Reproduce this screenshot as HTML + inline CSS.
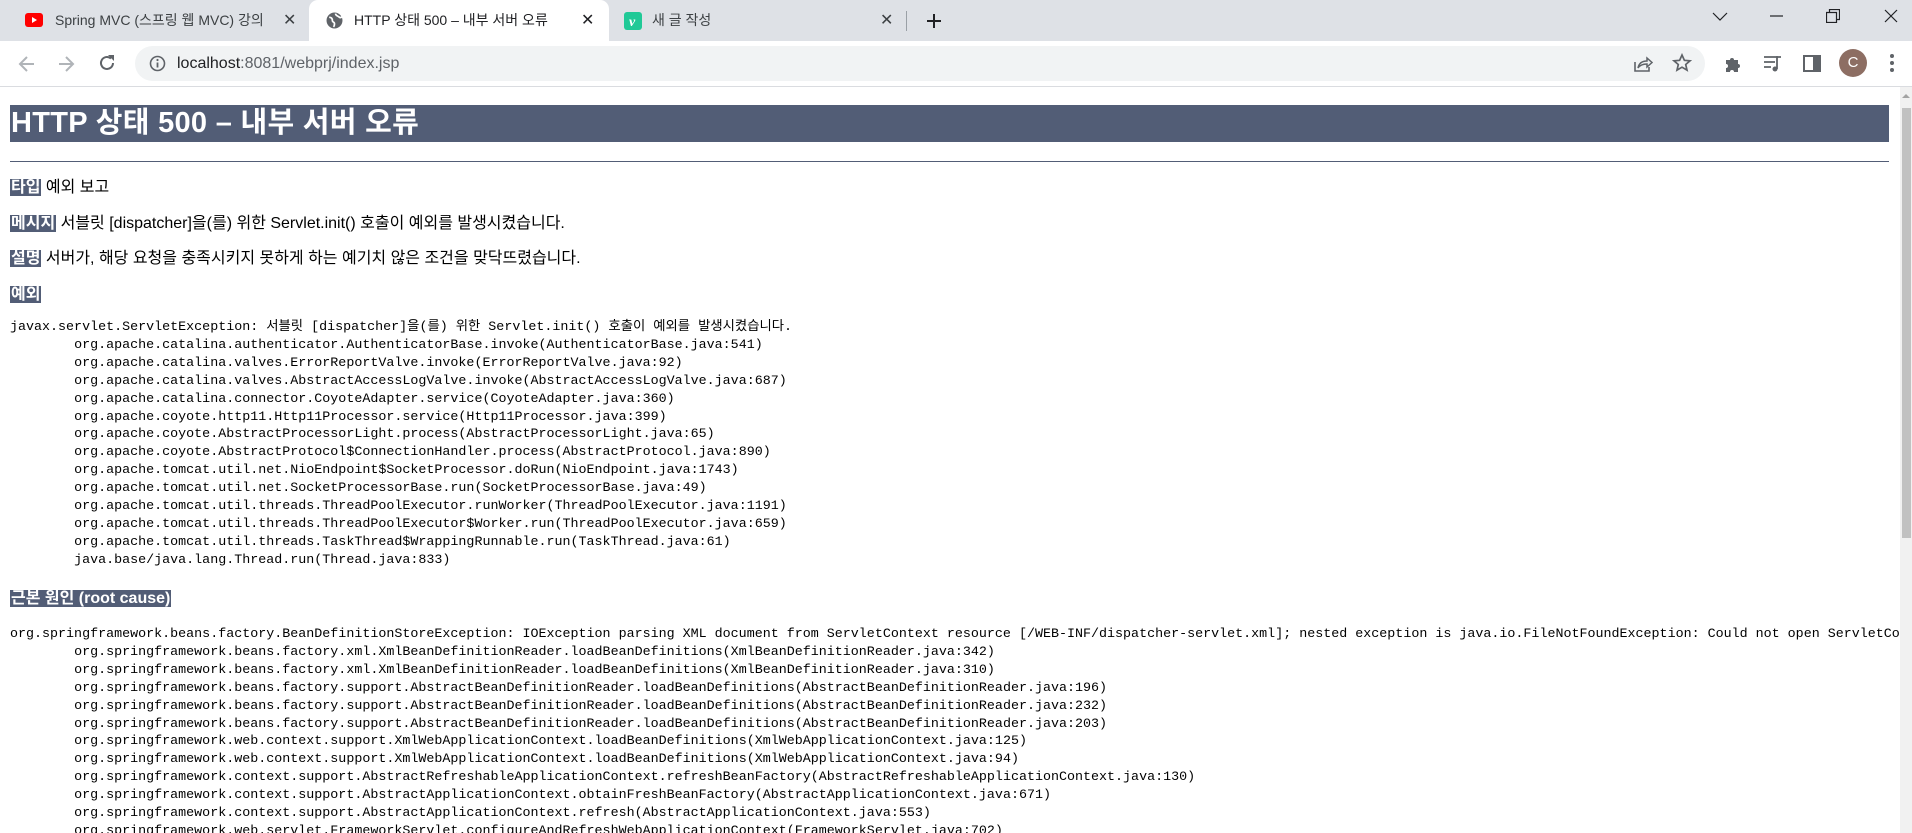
<!DOCTYPE html>
<html><head><meta charset="utf-8">
<style>
*{box-sizing:border-box;margin:0;padding:0}
body{width:1912px;height:833px;overflow:hidden;background:#fff;font-family:"Liberation Sans","Noto Sans CJK KR",sans-serif;position:relative}
.tabbar{position:absolute;left:0;top:0;width:1912px;height:41px;background:#dee1e6}
.tab{position:absolute;top:0;height:41px;font-size:14px;color:#3c4043;line-height:41px;white-space:nowrap;overflow:hidden}
.tab.active{background:#fff;border-radius:9px 9px 0 0;color:#202124}
.toolbar{position:absolute;left:0;top:41px;width:1912px;height:46px;background:#fff;border-bottom:1px solid #dadce0}
.omni{position:absolute;left:135px;top:5px;width:1570px;height:35px;background:#f1f3f4;border-radius:18px}
.url{position:absolute;left:177px;top:0;line-height:45px;font-size:16px;color:#202124}
.url span{color:#5f6368}
.content{position:absolute;left:0;top:87px;width:1900px;height:746px;overflow:hidden}
.scroll{position:absolute;left:1900px;top:87px;width:12px;height:746px;background:#f1f1f1}
.thumb{position:absolute;left:2px;top:21px;width:9px;height:430px;background:#c1c1c1}
h1{position:absolute;left:10px;top:18px;width:1879px;height:37px;background:#525d76;color:#fff;font-size:29px;font-weight:bold;line-height:37px;padding-left:1px;white-space:nowrap;letter-spacing:0.3px}
.hr{position:absolute;left:10px;top:74px;width:1879px;height:1px;background:#525d76}
.p{position:absolute;left:10px;font-size:16px;color:#000;white-space:nowrap;line-height:18px}
.p b{background:#525d76;color:#fff;font-weight:bold;padding:0 1px}
pre{position:absolute;left:10px;font-family:"Liberation Mono","Noto Sans CJK KR",monospace;font-size:13.35px;line-height:17.9px;color:#000;white-space:pre;tab-size:8}
</style></head><body>
<div class="tabbar">
  <div class="tab" style="left:0;width:306px">
    <svg style="position:absolute;left:25px;top:13px" width="18" height="14"><rect width="18" height="14" rx="3" fill="#f00"/><path d="M7 4v6l5-3z" fill="#fff"/></svg>
    <span style="position:absolute;left:55px;width:215px;overflow:hidden">Spring MVC (스프링 웹 MVC) 강의</span>
    <span style="position:absolute;left:283px;font-size:16px">✕</span>
  </div>
  <div class="tab active" style="left:309px;width:300px">
    <svg style="position:absolute;left:17px;top:12px" width="17" height="17" viewBox="0 0 16 16"><circle cx="8" cy="8" r="7.5" fill="#5f6368"/><path d="M3 5c2 0 3 1 3 3s2 1 2 3-1 3-1 3M9 1.5c0 2 2 2 3 3s2 1 3 0" stroke="#fff" stroke-width="1.6" fill="none"/></svg>
    <span style="position:absolute;left:45px">HTTP 상태 500 – 내부 서버 오류</span>
    <span style="position:absolute;left:272px;font-size:16px">✕</span>
  </div>
  <div class="tab" style="left:612px;width:294px">
    <svg style="position:absolute;left:12px;top:12px" width="18" height="18"><rect width="18" height="18" rx="3" fill="#20c997"/><text x="5" y="14" font-size="14" font-style="italic" font-weight="bold" fill="#fff" font-family="Liberation Serif,serif">v</text></svg>
    <span style="position:absolute;left:40px">새 글 작성</span>
    <span style="position:absolute;left:268px;font-size:16px">✕</span>
  </div>
  <div style="position:absolute;left:906px;top:11px;width:1px;height:20px;background:#9aa0a6"></div>
  <svg style="position:absolute;left:926px;top:13px" width="16" height="16"><path d="M8 1v14M1 8h14" stroke="#202124" stroke-width="2"/></svg>
  <svg style="position:absolute;left:1712px;top:10px" width="16" height="12"><path d="M1 3l7 7 7-7" stroke="#202124" fill="none" stroke-width="1.2"/></svg>
  <svg style="position:absolute;left:1770px;top:15px" width="14" height="3"><path d="M0 1h13" stroke="#202124" stroke-width="1.2"/></svg>
  <svg style="position:absolute;left:1826px;top:9px" width="14" height="14"><path d="M0.5 3.5h10v10h-10zM3.5 3.5v-3h10v10h-3" stroke="#202124" fill="none" stroke-width="1.2"/></svg>
  <svg style="position:absolute;left:1884px;top:9px" width="14" height="14"><path d="M1 1l12 12M13 1L1 13" stroke="#202124" stroke-width="1.2"/></svg>
</div>
<div class="toolbar">
  <svg style="position:absolute;left:18px;top:14px" width="18" height="18"><path d="M16 9H3M9 2L2 9l7 7" stroke="#b0b4b8" stroke-width="2" fill="none"/></svg>
  <svg style="position:absolute;left:57px;top:14px" width="18" height="18"><path d="M2 9h13M9 2l7 7-7 7" stroke="#b0b4b8" stroke-width="2" fill="none"/></svg>
  <svg style="position:absolute;left:98px;top:13px" width="18" height="18"><path d="M15 9a6 6 0 1 1-2-4.5" stroke="#5f6368" stroke-width="2" fill="none"/><path d="M10 1h6v6z" fill="#5f6368"/></svg>
  <div class="omni"></div>
  <svg style="position:absolute;left:149px;top:14px" width="17" height="17"><circle cx="8.5" cy="8.5" r="7" stroke="#5f6368" stroke-width="1.6" fill="none"/><path d="M8.5 7.5v5" stroke="#5f6368" stroke-width="1.8"/><circle cx="8.5" cy="5" r="1.1" fill="#5f6368"/></svg>
  <div class="url">localhost<span>:8081/webprj/index.jsp</span></div>
  <svg style="position:absolute;left:1633px;top:13px" width="20" height="19"><path d="M2 8v9h14v-4" stroke="#5f6368" stroke-width="1.6" fill="none"/><path d="M5 14c1-5 4-7 9-7V4l5 4.5-5 4.5v-3c-4 0-7 1-9 4z" stroke="#5f6368" stroke-width="1.5" fill="none"/></svg>
  <svg style="position:absolute;left:1672px;top:12px" width="20" height="20"><path d="M10 2l2.4 5.3 5.6.5-4.3 3.7 1.3 5.6L10 14.2 5 17.1l1.3-5.6L2 7.8l5.6-.5z" stroke="#5f6368" stroke-width="1.7" fill="none"/></svg>
  <svg style="position:absolute;left:1724px;top:13px" width="19" height="19"><path d="M2 6h4a2 2 0 1 1 4 0h4v4a2 2 0 1 1 0 4v4H10a2 2 0 1 0-4 0H2v-4a2 2 0 1 0 0-4z" fill="#5f6368"/></svg>
  <svg style="position:absolute;left:1763px;top:14px" width="20" height="18"><path d="M1 2h14M1 7h11M1 12h7" stroke="#5f6368" stroke-width="1.8"/><circle cx="12" cy="14" r="2.5" fill="#5f6368"/><path d="M14 14V2h4" stroke="#5f6368" stroke-width="1.8" fill="none"/></svg>
  <svg style="position:absolute;left:1803px;top:14px" width="19" height="18"><rect x="1" y="1" width="16" height="15" stroke="#5f6368" stroke-width="2" fill="none"/><rect x="10" y="1" width="7" height="15" fill="#5f6368"/></svg>
  <div style="position:absolute;left:1839px;top:8px;width:28px;height:28px;border-radius:50%;background:#8d6e63;color:#fff;font-size:15px;line-height:28px;text-align:center">C</div>
  <svg style="position:absolute;left:1889px;top:12px" width="6" height="20"><circle cx="3" cy="3" r="2" fill="#5f6368"/><circle cx="3" cy="10" r="2" fill="#5f6368"/><circle cx="3" cy="17" r="2" fill="#5f6368"/></svg>
</div>
<div class="content">
<h1>HTTP 상태 500 – 내부 서버 오류</h1>
<div class="hr"></div>
<div class="p" style="top:92px"><b>타입</b> 예외 보고</div>
<div class="p" style="top:128px"><b>메시지</b> 서블릿 [dispatcher]을(를) 위한 Servlet.init() 호출이 예외를 발생시켰습니다.</div>
<div class="p" style="top:163px"><b>설명</b> 서버가, 해당 요청을 충족시키지 못하게 하는 예기치 않은 조건을 맞닥뜨렸습니다.</div>
<div class="p" style="top:199px"><b>예외</b></div>
<pre style="top:232px">javax.servlet.ServletException: 서블릿 [dispatcher]을(를) 위한 Servlet.init() 호출이 예외를 발생시켰습니다.
	org.apache.catalina.authenticator.AuthenticatorBase.invoke(AuthenticatorBase.java:541)
	org.apache.catalina.valves.ErrorReportValve.invoke(ErrorReportValve.java:92)
	org.apache.catalina.valves.AbstractAccessLogValve.invoke(AbstractAccessLogValve.java:687)
	org.apache.catalina.connector.CoyoteAdapter.service(CoyoteAdapter.java:360)
	org.apache.coyote.http11.Http11Processor.service(Http11Processor.java:399)
	org.apache.coyote.AbstractProcessorLight.process(AbstractProcessorLight.java:65)
	org.apache.coyote.AbstractProtocol$ConnectionHandler.process(AbstractProtocol.java:890)
	org.apache.tomcat.util.net.NioEndpoint$SocketProcessor.doRun(NioEndpoint.java:1743)
	org.apache.tomcat.util.net.SocketProcessorBase.run(SocketProcessorBase.java:49)
	org.apache.tomcat.util.threads.ThreadPoolExecutor.runWorker(ThreadPoolExecutor.java:1191)
	org.apache.tomcat.util.threads.ThreadPoolExecutor$Worker.run(ThreadPoolExecutor.java:659)
	org.apache.tomcat.util.threads.TaskThread$WrappingRunnable.run(TaskThread.java:61)
	java.base/java.lang.Thread.run(Thread.java:833)</pre>
<div class="p" style="top:503px"><b>근본 원인 (root cause)</b></div>
<pre style="top:539px">org.springframework.beans.factory.BeanDefinitionStoreException: IOException parsing XML document from ServletContext resource [/WEB-INF/dispatcher-servlet.xml]; nested exception is java.io.FileNotFoundException: Could not open ServletContext resource [/WEB-INF/dispatcher-servlet.xml]
	org.springframework.beans.factory.xml.XmlBeanDefinitionReader.loadBeanDefinitions(XmlBeanDefinitionReader.java:342)
	org.springframework.beans.factory.xml.XmlBeanDefinitionReader.loadBeanDefinitions(XmlBeanDefinitionReader.java:310)
	org.springframework.beans.factory.support.AbstractBeanDefinitionReader.loadBeanDefinitions(AbstractBeanDefinitionReader.java:196)
	org.springframework.beans.factory.support.AbstractBeanDefinitionReader.loadBeanDefinitions(AbstractBeanDefinitionReader.java:232)
	org.springframework.beans.factory.support.AbstractBeanDefinitionReader.loadBeanDefinitions(AbstractBeanDefinitionReader.java:203)
	org.springframework.web.context.support.XmlWebApplicationContext.loadBeanDefinitions(XmlWebApplicationContext.java:125)
	org.springframework.web.context.support.XmlWebApplicationContext.loadBeanDefinitions(XmlWebApplicationContext.java:94)
	org.springframework.context.support.AbstractRefreshableApplicationContext.refreshBeanFactory(AbstractRefreshableApplicationContext.java:130)
	org.springframework.context.support.AbstractApplicationContext.obtainFreshBeanFactory(AbstractApplicationContext.java:671)
	org.springframework.context.support.AbstractApplicationContext.refresh(AbstractApplicationContext.java:553)
	org.springframework.web.servlet.FrameworkServlet.configureAndRefreshWebApplicationContext(FrameworkServlet.java:702)</pre>
</div>
<div class="scroll"><svg style="position:absolute;left:2px;top:6px" width="8" height="6"><path d="M0 5l4-4 4 4z" fill="#a3a3a3"/></svg><div class="thumb"></div></div>
</body></html>
